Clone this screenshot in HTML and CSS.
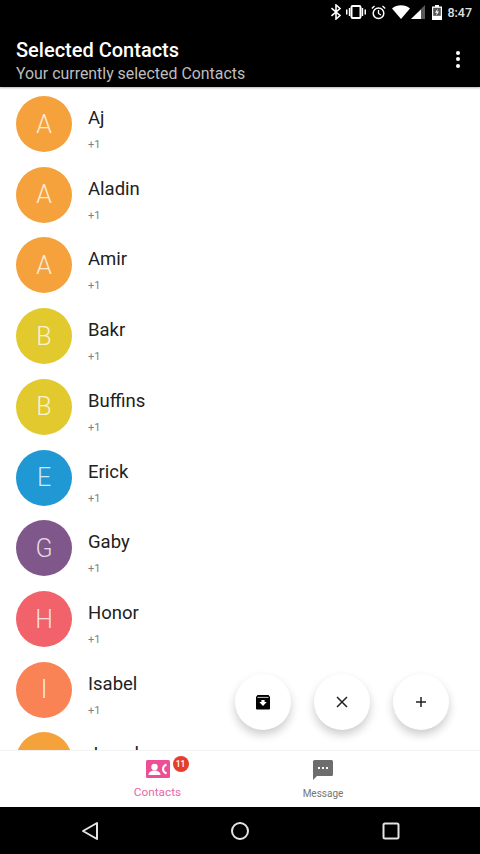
FILE: index.html
```html
<!DOCTYPE html>
<html lang="en">
<head>
<meta charset="utf-8">
<title>Selected Contacts</title>
<link rel="stylesheet" href="styles.css">
</head>
<body>
<div class="screen">
  <header class="appbar">
    <div class="status">
      <svg class="st st-bt" width="12" height="16" viewBox="0 0 12 16"><path d="M1.5 4.2 10 11.500 6 15V1l4 3.500L1.500 11.800" fill="none" stroke="#fff" stroke-width="1.600"/></svg>
      <svg class="st st-vib" width="20" height="14" viewBox="0 0 20 14"><rect x="5.500" y="1" width="9" height="12" rx="1.200" fill="none" stroke="#fff" stroke-width="2"/><path d="M0 4.500h1.500v5H0zM2.800 3h1.500v8H2.800zM15.700 3h1.500v8h-1.500zM18.500 4.500H20v5h-1.500z" fill="#fff"/></svg>
      <svg class="st st-alarm" width="15" height="15" viewBox="0 0 15 15"><circle cx="7.500" cy="8.200" r="5.300" fill="none" stroke="#fff" stroke-width="1.500"/><path d="M7.500 5v3.500l2.500 1.500M.8 3.500 3.500 1M14.200 3.500 11.500 1" fill="none" stroke="#fff" stroke-width="1.300"/></svg>
      <svg class="st st-wifi" width="18" height="14" viewBox="0 0 18 14"><path d="M0 3.500C5-.8 13-.8 18 3.500L9 14z" fill="#fff"/></svg>
      <svg class="st st-signal" width="14" height="14" viewBox="0 0 14 14"><path d="M14 0v14H0z" fill="#fff" opacity=".35"/><path d="M10 4.500V14H0z" fill="#fff"/></svg>
      <svg class="st st-batt" width="10" height="15" viewBox="0 0 10 15"><path d="M3 0h4v1.500h3V15H0V1.500h3z" fill="#fff"/><path d="M1.200 2.800h7.600v8H1.200z" fill="#555"/><path d="M5.800 3.500 3 7.800h1.800l-.6 3 2.800-4.300H5.200z" fill="#fff"/></svg>
      <span class="clock">8:47</span>
    </div>
    <div class="toolbar">
      <div class="titles">
        <h1 class="title">Selected Contacts</h1>
        <p class="subtitle">Your currently selected Contacts</p>
      </div>
      <div class="more"><i></i><i></i><i></i></div>
    </div>
  </header>

  <main class="list">
    <div class="row"><div class="avatar c-orange">A</div><div class="info"><div class="name">Aj</div><div class="phone">+1</div></div></div>
    <div class="row"><div class="avatar c-orange">A</div><div class="info"><div class="name">Aladin</div><div class="phone">+1</div></div></div>
    <div class="row"><div class="avatar c-orange">A</div><div class="info"><div class="name">Amir</div><div class="phone">+1</div></div></div>
    <div class="row"><div class="avatar c-yellow">B</div><div class="info"><div class="name">Bakr</div><div class="phone">+1</div></div></div>
    <div class="row"><div class="avatar c-yellow">B</div><div class="info"><div class="name">Buffins</div><div class="phone">+1</div></div></div>
    <div class="row"><div class="avatar c-blue">E</div><div class="info"><div class="name">Erick</div><div class="phone">+1</div></div></div>
    <div class="row"><div class="avatar c-purple">G</div><div class="info"><div class="name">Gaby</div><div class="phone">+1</div></div></div>
    <div class="row"><div class="avatar c-red">H</div><div class="info"><div class="name">Honor</div><div class="phone">+1</div></div></div>
    <div class="row"><div class="avatar c-coral">I</div><div class="info"><div class="name">Isabel</div><div class="phone">+1</div></div></div>
    <div class="row"><div class="avatar c-orange">J</div><div class="info"><div class="name">Jamal</div></div></div>
    <div class="fabs">
      <button class="fab"><svg width="16" height="16" viewBox="0 0 16 16"><path d="M2.500 1h11L15 3v11.500a1 1 0 0 1-1 1H2a1 1 0 0 1-1-1V3z" fill="#000"/><path d="M2.500 3.400h11" stroke="#fff" stroke-width=".8"/><path d="M8 12 4.200 8H6.400V6h3.200v2h2.200z" fill="#fff"/></svg></button>
      <button class="fab"><svg width="12" height="12" viewBox="0 0 12 12"><path d="M1 1l10 10M11 1 1 11" stroke="#222" stroke-width="1.500"/></svg></button>
      <button class="fab"><svg width="12" height="12" viewBox="0 0 12 12"><path d="M6 1v10M1 6h10" stroke="#222" stroke-width="1.500"/></svg></button>
    </div>
  </main>

  <nav class="tabs">
    <div class="tab tab-contacts">
      <div class="tab-icon">
        <svg width="24" height="18" viewBox="0 0 24 18"><rect width="24" height="18" rx="1.500" fill="#ec4f95"/><circle cx="8.500" cy="7" r="3.200" fill="#fff"/><path d="M2.500 15c0-3 3-4.500 6-4.500s6 1.500 6 4.500z" fill="#fff"/><path d="M20.500 4.500c-2.500 1-3.500 3-3.500 4.500s1 3.500 3.500 4.500" fill="none" stroke="#fff" stroke-width="2"/></svg>
        <span class="badge">11</span>
      </div>
      <span class="tab-label">Contacts</span>
    </div>
    <div class="tab tab-message">
      <svg width="20" height="20" viewBox="0 0 20 20"><path d="M1.500 0h17A1.500 1.500 0 0 1 20 1.500v13a1.500 1.500 0 0 1-1.500 1.500H4l-4 4V1.500A1.500 1.500 0 0 1 1.500 0z" fill="#6d6d6d"/><path d="M5 7h2v2H5zM9 7h2v2H9zM13 7h2v2h-2z" fill="#fff"/></svg>
      <span class="tab-label">Message</span>
    </div>
  </nav>

  <footer class="sysnav">
    <svg width="18" height="20" viewBox="0 0 18 20"><path d="M16 2v16L2 10z" fill="none" stroke="#e4e4e4" stroke-width="2" stroke-linejoin="round"/></svg>
    <svg width="20" height="20" viewBox="0 0 20 20"><circle cx="10" cy="10" r="8" fill="none" stroke="#e4e4e4" stroke-width="2"/></svg>
    <svg class="sys-square" width="18" height="18" viewBox="0 0 18 18"><rect x="1.500" y="1.500" width="15" height="15" rx="1.500" fill="none" stroke="#e4e4e4" stroke-width="2"/></svg>
  </footer>
</div>
</body>
</html>
```
FILE: styles.css
```css
* { box-sizing: border-box; }
html, body { margin: 0; padding: 0; }
body { font-family: Roboto, "Liberation Sans", sans-serif; background: #fff; }
.screen { width: 480px; height: 854px; display: flex; flex-direction: column; overflow: hidden; }

.appbar { height: 87px; background: #000; color: #fff; flex: none; box-shadow: 0 1px 2px rgba(0,0,0,.3); position: relative; z-index: 2; }
.status { height: 25px; display: flex; align-items: center; justify-content: flex-end; padding: 0 8px 1px 0; }
.st { display: block; }
.st-bt { margin-right: 4px; }
.st-vib { margin-right: 5px; }
.st-alarm { margin-right: 6px; }
.st-wifi { margin-right: 1px; }
.st-signal { margin-right: 7px; }
.st-batt { margin-right: 5px; }
.clock { font-size: 12.500px; font-weight: 500; color: #e0e0e0; width: 25px; text-align: right; }

.toolbar { display: flex; align-items: center; justify-content: space-between; padding: 0 20px 0 16px; height: 62px; }
.titles { padding-top: 11px; }
.title { margin: 0; font-size: 20px; font-weight: 500; line-height: 24px; }
.subtitle { margin: 0; font-size: 15.900px; line-height: 23px; color: #bdbdbd; }
.more { display: flex; flex-direction: column; gap: 2.500px; padding-top: 6px; }
.more i { width: 4px; height: 4px; border-radius: 50%; background: #fff; display: block; }

.list { flex: 1; min-height: 0; position: relative; overflow: hidden; padding-top: 9px; }
.row { height: 70.720px; display: flex; align-items: flex-start; padding-left: 16px; }
.avatar { width: 56px; height: 56px; border-radius: 50%; color: rgba(255,255,255,.8); font-size: 25px; font-weight: 300; display: flex; align-items: center; justify-content: center; flex: none; }
.c-orange { background: #f6a23c; }
.c-yellow { background: #e1c92e; }
.c-blue { background: #1f98d3; }
.c-purple { background: #80578a; }
.c-red { background: #f1626a; }
.c-coral { background: #f98354; }
.info { margin-left: 16px; }
.name { font-size: 18.500px; line-height: 24px; color: #212121; margin-top: 10px; }
.phone { font-size: 11px; line-height: 14px; color: #808080; margin-top: 8px; }

.fabs { position: absolute; top: 587px; left: 235px; display: flex; gap: 23px; }
.fab { width: 56px; height: 56px; border-radius: 50%; border: 0; padding: 0; background: #fff; box-shadow: 0 5px 10px rgba(0,0,0,.2); display: flex; align-items: center; justify-content: center; }

.tabs { height: 57px; flex: none; background: #fff; border-top: 1px solid #f2f2f2; display: flex; padding-left: 134px; position: relative; }
.tab { display: flex; flex-direction: column; align-items: center; }
.tab-contacts { width: 47px; padding-top: 9px; }
.tab-contacts .tab-label { color: #e868a8; font-size: 11.800px; line-height: 14px; margin-top: 7px; }
.tab-icon { position: relative; height: 18px; }
.tab-icon svg { display: block; }
.badge { position: absolute; left: 27px; top: -4px; width: 16px; height: 16px; border-radius: 50%; background: #e53f2c; color: #fff; font-size: 8.500px; font-weight: 500; line-height: 16px; text-align: center; }
.tab-message { margin-left: 122px; width: 40px; padding-top: 9px; }
.tab-message svg { display: block; }
.tab-message .tab-label { color: #757575; font-size: 10px; line-height: 13px; margin-top: 7px; }

.sysnav { height: 47px; flex: none; background: #000; display: flex; align-items: center; padding-left: 81px; gap: 131px; }
.sys-square { margin-left: 1px; }
```
